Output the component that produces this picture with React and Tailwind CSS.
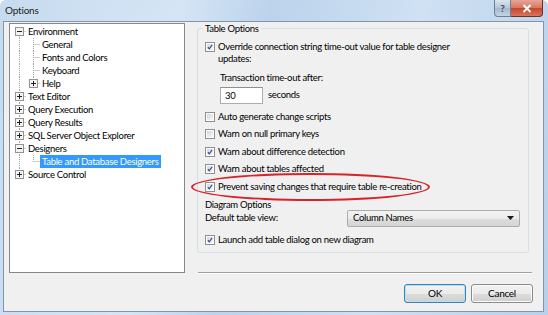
import React from 'react';

const FONT = "font-['Lato','Open_Sans',sans-serif]";

function Check({ checked }) {
  return (
    <span className="flex w-[10px] h-[10px] shrink-0 border border-[#8e8f8f] bg-white p-px">
      <span className="flex w-full h-full items-center justify-center bg-gradient-to-br from-[#d2d6dc] to-[#f8f8f8]">
        {checked && (
          <svg width="8" height="8" viewBox="0 0 8 8">
            <path d="M1.2 4.2 L3 6.4 L6.8 1.2" fill="none" stroke="#2e4586" strokeWidth="1.4" />
          </svg>
        )}
      </span>
    </span>
  );
}

function CheckRow({ checked, children, className = 'h-[17.5px]' }) {
  return (
    <div className={`flex items-center gap-[3px] ${className}`}>
      <Check checked={checked} />
      <span>{children}</span>
    </div>
  );
}

// one 14x13 column of tree lines
function Cell({ v, h, box }) {
  const dash = { stroke: '#a0a0a0', strokeDasharray: '1 1' };
  return (
    <svg width="14" height="13" className="shrink-0">
      {v === 'full' && <line x1="7.5" y1="0" x2="7.5" y2="13" {...dash} />}
      {v === 'top' && <line x1="7.5" y1="0" x2="7.5" y2="6.5" {...dash} />}
      {v === 'bottom' && <line x1="7.5" y1="6.5" x2="7.5" y2="13" {...dash} />}
      {h && <line x1="7.5" y1="6.5" x2="14" y2="6.5" {...dash} />}
      {box && (
        <g>
          <rect x="3.5" y="2.5" width="8" height="8" fill="#f4f4f4" stroke="#929292" />
          <line x1="5" y1="6.5" x2="10" y2="6.5" stroke="#1f1f1f" />
          {box === 'plus' && <line x1="7.5" y1="4" x2="7.5" y2="9" stroke="#1f1f1f" />}
        </g>
      )}
    </svg>
  );
}

const tree = [
  { cells: [{ v: 'bottom', h: 1, box: 'minus' }], label: 'Environment' },
  { cells: [{ v: 'full' }, { v: 'full', h: 1 }], label: 'General' },
  { cells: [{ v: 'full' }, { v: 'full', h: 1 }], label: 'Fonts and Colors' },
  { cells: [{ v: 'full' }, { v: 'full', h: 1 }], label: 'Keyboard' },
  { cells: [{ v: 'full' }, { v: 'top', h: 1, box: 'plus' }], label: 'Help' },
  { cells: [{ v: 'full', h: 1, box: 'plus' }], label: 'Text Editor' },
  { cells: [{ v: 'full', h: 1, box: 'plus' }], label: 'Query Execution' },
  { cells: [{ v: 'full', h: 1, box: 'plus' }], label: 'Query Results' },
  { cells: [{ v: 'full', h: 1, box: 'plus' }], label: 'SQL Server Object Explorer' },
  { cells: [{ v: 'full', h: 1, box: 'minus' }], label: 'Designers' },
  { cells: [{ v: 'full' }, { v: 'top', h: 1 }], label: 'Table and Database Designers', selected: true },
  { cells: [{ v: 'top', h: 1, box: 'plus' }], label: 'Source Control' },
];

function WinButton({ children, primary }) {
  return (
    <button
      className={`w-[62px] h-[19px] rounded-[3px] border ${primary ? 'border-[#3c7fb1] shadow-[inset_0_0_0_1px_#b6e0f8]' : 'border-[#8a8a8a] shadow-[inset_0_0_0_1px_#fcfcfc]'} bg-[linear-gradient(#f2f2f2_0%,#ebebeb_50%,#dddddd_51%,#cfcfcf_100%)] text-[10px] leading-none text-black`}
    >
      {children}
    </button>
  );
}

export default function App() {
  return (
    <div className={`${FONT} w-[548px] h-[315px] overflow-hidden bg-white`}>
      <div className="relative flex flex-col w-[548px] h-[315px] rounded-t-[6px] bg-[linear-gradient(100deg,#c7dbef_0%,#d5e5f5_30%,#bcd3ec_45%,#cfe1f3_70%,#b9d0ea_100%)] text-[9.5px] tracking-[-0.3px] text-black">
        {/* title bar */}
        <div className="flex h-[21px] shrink-0">
          <div className="pl-[5px] pt-[1px] text-[10px] tracking-[-0.2px] leading-[18px] text-[#1e1e1e]">Options</div>
          <div className="ml-auto mr-[5px] flex h-[17px]">
            <div className="w-[17px] flex items-center justify-center rounded-bl-[4px] border border-t-0 border-[#6d7f94] bg-[linear-gradient(#dbe5ef,#b7c6d6_50%,#a5b7ca_51%,#c4d4e4)] text-[10px] font-bold text-[#3a4a5e]">?</div>
            <div className="w-[32px] flex items-center justify-center rounded-br-[4px] border border-t-0 border-l-0 border-[#6e2f2a] bg-[linear-gradient(#e8a598,#d5765f_50%,#c6452c_51%,#d8745c)]">
              <svg width="10" height="9" viewBox="0 0 10 9">
                <path d="M1.5 1 L8.5 8 M8.5 1 L1.5 8" stroke="#fff" strokeWidth="2" />
              </svg>
            </div>
          </div>
        </div>

        {/* client area */}
        <div className="mx-[3px] w-[541px] h-[291px] border border-[#8295ab] bg-[#f0f0f0] flex">
          {/* tree */}
          <div className="ml-[5px] mt-[1px] w-[176px] h-[250px] border border-[#828790] bg-white pt-[1px] pl-[2px]">
            {tree.map((row) => (
              <div key={row.label} className="flex h-[13px] items-center">
                {row.cells.map((c, i) => (
                  <Cell key={i} {...c} />
                ))}
                <span
                  className={`px-[2px] h-[13px] leading-[13px] whitespace-nowrap ${row.selected ? 'bg-[#3399ff] text-white' : ''}`}
                >
                  {row.label}
                </span>
              </div>
            ))}
          </div>

          {/* right side */}
          <div className="ml-[5px] w-[352px] flex flex-col">
            <fieldset className="ml-[7px] w-[332px] border border-[#d5dfe5] rounded-[3px] px-[5px] pb-[5px]">
              <legend className="px-[2px] leading-[13px]">Table Options</legend>
              <div className="pl-[2px] leading-[12px]">
                <div className="h-[5.5px]" />
                <div className="flex gap-[3px] h-[24px]">
                  <span className="mt-[1px]">
                    <Check checked />
                  </span>
                  <span>
                    Override connection string time-out value for table designer
                    <br />
                    updates:
                  </span>
                </div>
                <div className="mt-[7px] h-[12px] pl-[15px]">Transaction time-out after:</div>
                <div className="mt-[3px] h-[17px] pl-[15px] flex items-center">
                  <div className="w-[43px] h-[17px] border border-[#abadb3] border-t-[#8c8f94] bg-white pl-[4px] leading-[15px]">30</div>
                  <span className="ml-[5px]">seconds</span>
                </div>
                <div className="mt-[4.5px]">
                  <CheckRow>Auto generate change scripts</CheckRow>
                  <CheckRow>Warn on null primary keys</CheckRow>
                  <CheckRow checked>Warn about difference detection</CheckRow>
                  <CheckRow checked>Warn about tables affected</CheckRow>
                  <div className="relative">
                    <CheckRow checked>Prevent saving changes that require table re-creation</CheckRow>
                    {/* red annotation ellipse */}
                    <div className="absolute left-[-14px] top-[-5px] w-[239px] h-[28px] rounded-[50%] border-2 border-[#d8232a]" />
                  </div>
                </div>
                <div className="mt-[4px] h-[10px] leading-[10px]">Diagram Options</div>
                <div className="flex items-center h-[17px]">
                  <span className="w-[142px]">Default table view:</span>
                  <div className="w-[173px] h-[17px] flex items-center rounded-[2px] border border-[#acacac] bg-[linear-gradient(#f3f3f3,#ebebeb_50%,#dddddd_51%,#d5d5d5)] pl-[5px] pr-[5px]">
                    <span>Column Names</span>
                    <svg width="7" height="4" viewBox="0 0 7 4" className="ml-auto">
                      <path d="M0 0 H7 L3.5 4 Z" fill="#1a1a1a" />
                    </svg>
                  </div>
                </div>
                <CheckRow checked className="mt-[6px] h-[14px]">Launch add table dialog on new diagram</CheckRow>
              </div>
            </fieldset>

            <div className="mt-[19px] ml-[8px] w-[334px] border-t border-[#a0a0a0] border-b border-b-white" />

            <div className="mt-[10px] mr-[9px] flex justify-end gap-[5px]">
              <WinButton primary>OK</WinButton>
              <WinButton>Cancel</WinButton>
            </div>
          </div>
        </div>
      </div>
    </div>
  );
}
